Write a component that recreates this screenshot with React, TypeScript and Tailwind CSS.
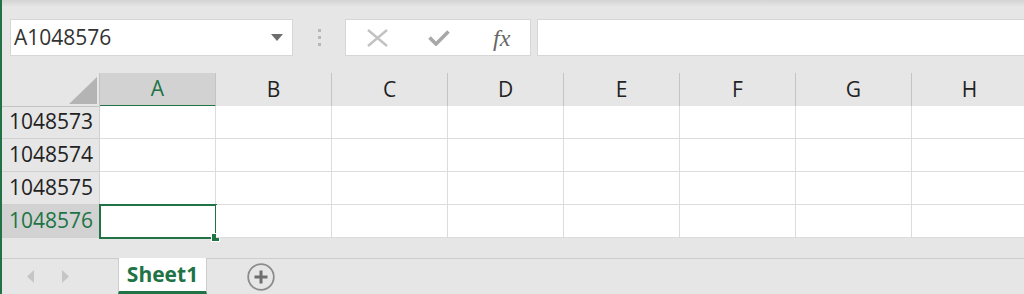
const COLS = ["A", "B", "C", "D", "E", "F", "G", "H"];
const ROWS = ["1048573", "1048574", "1048575", "1048576"];
const font = "font-['Open_Sans','Noto_Sans',sans-serif]";

function HeaderRow() {
  return (
    <div className="grid h-[33px] grid-cols-[98px_repeat(8,116px)]">
      <div className="relative border-b border-r border-[#c4c4c4]">
        <svg className="absolute bottom-[2px] right-[2px]" width="28" height="27" viewBox="0 0 28 27">
          <polygon points="28,0 28,27 0,27" fill="#b4b4b4" />
        </svg>
      </div>
      {COLS.map((c) => (
        <div
          key={c}
          className={`flex items-center justify-center border-r border-[#c4c4c4] text-[21px] ${
            c === "A"
              ? "border-b-2 border-b-[#217346] bg-[#d2d2d2] text-[#217346]"
              : "border-b border-b-[#c4c4c4] text-[#222]"
          }`}
        >
          {c}
        </div>
      ))}
    </div>
  );
}

function Row({ label, selected }: { label: string; selected?: boolean }) {
  return (
    <div className="relative z-10 grid h-[33px] grid-cols-[98px_repeat(8,116px)]">
      <div
        className={`flex items-center justify-end border-b border-r border-[#d0d0d0] pr-[6px] text-[21px] ${
          selected ? "bg-[#d2d2d2] text-[#217346]" : "text-[#222]"
        }`}
      >
        {label}
      </div>
      {COLS.map((c) => (
        <div key={c} className="relative border-b border-r border-[#dcdcdc] bg-white">
          {selected && c === "A" && (
            <div className="absolute -left-[1px] -top-[1px] bottom-[-2px] right-[-2px] border-2 border-[#217346]">
              <div className="absolute -bottom-[5px] -right-[5px] h-[9px] w-[9px] border border-white bg-[#217346]" />
            </div>
          )}
        </div>
      ))}
    </div>
  );
}

export default function App() {
  return (
    <div className={`flex h-[294px] w-[1024px] flex-col overflow-hidden border-l-2 border-[#217346] bg-[#e6e6e6] ${font}`}>
      <div className="h-[6px] bg-gradient-to-b from-[#d4d4d4] to-[#e3e3e3]" />
      <div className="h-[13px]" />

      {/* formula bar */}
      <div className="flex h-[37px]">
        <div className="ml-[8px] flex w-[283px] items-center justify-between border border-[#d6d6d6] bg-white pl-[3px] pr-[9px] text-[21px] text-[#333]">
          <span>A1048576</span>
          <svg width="12" height="7" viewBox="0 0 12 7">
            <polygon points="0,0 12,0 6,7" fill="#6d6d6d" />
          </svg>
        </div>
        <div className="flex w-[52px] flex-col items-center justify-center gap-[4px]">
          <span className="h-[3px] w-[3px] bg-[#b8b8b8]" />
          <span className="h-[3px] w-[3px] bg-[#b8b8b8]" />
          <span className="h-[3px] w-[3px] bg-[#b8b8b8]" />
        </div>
        <div className="flex w-[186px] items-center border border-[#d6d6d6] bg-white">
          <svg className="ml-[21px]" width="21" height="18" viewBox="0 0 21 18">
            <path d="M1 1L20 17M20 1L1 17" stroke="#c2c2c2" strokeWidth="2.4" />
          </svg>
          <svg className="ml-[40px]" width="22" height="16" viewBox="0 0 22 16">
            <path d="M1.5 7.5L8 14L20.5 1.5" fill="none" stroke="#a8a8a8" strokeWidth="3.6" />
          </svg>
          <span className="ml-[43px] font-['Liberation_Serif',serif] text-[24px] italic text-[#666]">fx</span>
        </div>
        <div className="ml-[6px] flex-1 border border-r-0 border-[#d6d6d6] bg-white" />
      </div>

      <div className="h-[17px]" />

      {/* grid */}
      <HeaderRow />
      {ROWS.map((r) => (
        <Row key={r} label={r} selected={r === "1048576"} />
      ))}

      <div className="h-[20px]" />

      {/* sheet tabs */}
      <div className="flex h-[36px] items-stretch border-t border-[#cdcdcd]">
        <div className="flex w-[116px] items-center gap-[28px] pl-[25px]">
          <svg width="7" height="13" viewBox="0 0 7 13">
            <polygon points="7,0 7,13 0,6.5" fill="#c6c6c6" />
          </svg>
          <svg width="7" height="13" viewBox="0 0 7 13">
            <polygon points="0,0 0,13 7,6.5" fill="#c6c6c6" />
          </svg>
        </div>
        <div className="-mt-px flex w-[89px] items-center justify-center border-x border-[#cdcdcd] border-b-[3px] border-b-[#217346] bg-white text-[21px] font-bold text-[#217346]">
          Sheet1
        </div>
        <div className="flex items-center pl-[40px]">
          <svg width="28" height="28" viewBox="0 0 28 28">
            <circle cx="14" cy="14" r="12.8" fill="none" stroke="#8c8c8c" strokeWidth="1.8" />
            <path d="M14 7.5v13M7.5 14h13" stroke="#6e6e6e" strokeWidth="3" />
          </svg>
        </div>
      </div>
    </div>
  );
}
